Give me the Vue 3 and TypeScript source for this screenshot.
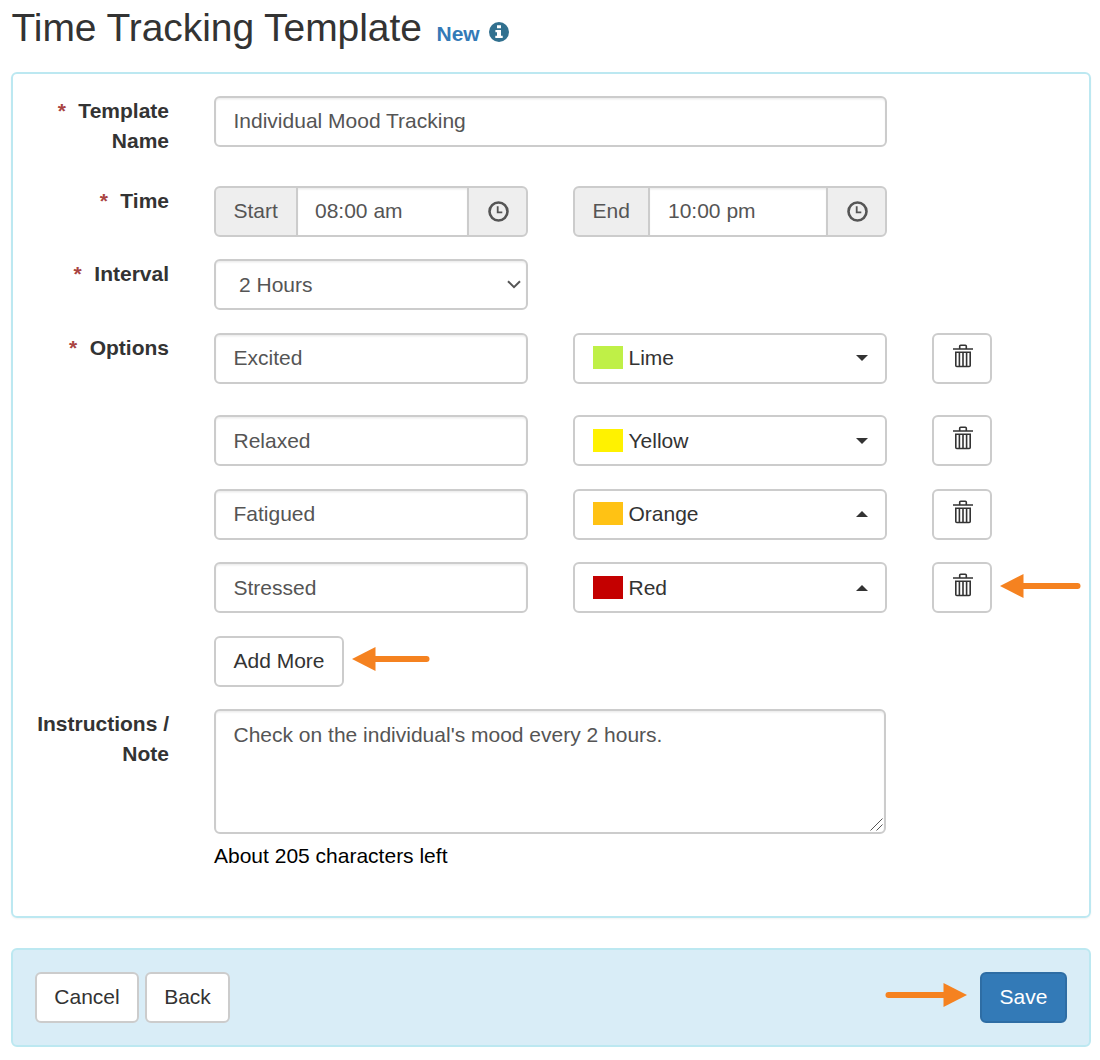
<script setup lang="ts">
import { ref } from 'vue'

interface MoodOption {
  name: string
  color: string
  label: string
  up: boolean
  height: number
}

const templateName = ref('Individual Mood Tracking')
const startTime = ref('08:00 am')
const endTime = ref('10:00 pm')
const note = ref("Check on the individual's mood every 2 hours.")

const options = ref<MoodOption[]>([
  { name: 'Excited', color: '#bff047', label: 'Lime', up: false, height: 82 },
  { name: 'Relaxed', color: '#fff200', label: 'Yellow', up: false, height: 74 },
  { name: 'Fatigued', color: '#ffc214', label: 'Orange', up: true, height: 73 },
  { name: 'Stressed', color: '#c40000', label: 'Red', up: true, height: 74 },
])
</script>

<template>
  <main class="page">
    <header class="heading">
      <h1>Time Tracking Template</h1>
      <span class="state">New</span>
      <svg class="info" viewBox="0 0 20 20">
        <circle cx="10" cy="10" r="10" fill="#31708f" />
        <path fill="#fff" d="M8 3.2h4v3H8zM6.4 8H12v5.8h1.7v2.3H6.3v-2.300H8v-3.500H6.4z" />
      </svg>
    </header>

    <section class="panel">
      <div class="row row-name">
        <label><i>*</i>Template<br />Name</label>
        <input v-model="templateName" class="control wide" />
      </div>

      <div class="row row-time">
        <label><i>*</i>Time</label>
        <div class="group">
          <span class="addon start">Start</span>
          <input v-model="startTime" />
          <span class="addon clock">
            <svg viewBox="0 0 21 21"><circle cx="10.5" cy="10.5" r="9" /><path d="M9.700 5.200v6.100h4.600" /></svg>
          </span>
        </div>
        <div class="group">
          <span class="addon end">End</span>
          <input v-model="endTime" class="end-input" />
          <span class="addon clock">
            <svg viewBox="0 0 21 21"><circle cx="10.5" cy="10.5" r="9" /><path d="M9.700 5.200v6.100h4.600" /></svg>
          </span>
        </div>
      </div>

      <div class="row row-interval">
        <label><i>*</i>Interval</label>
        <div class="control select">
          <span>2 Hours</span>
          <svg viewBox="0 0 14 9"><path d="M1 1.2 7 7.2 13 1.2" /></svg>
        </div>
      </div>

      <div
        v-for="(o, i) in options"
        :key="i"
        class="row option"
        :class="{ even: i % 2 === 1 }"
        :style="{ height: o.height + 'px' }"
      >
        <label><template v-if="i === 0"><i>*</i>Options</template></label>
        <input v-model="o.name" class="control" />
        <button class="btn dropdown">
          <span class="swatch" :style="{ background: o.color }"></span>
          <span>{{ o.label }}</span>
          <span class="caret" :class="{ up: o.up }"></span>
        </button>
        <button class="btn trash" aria-label="Delete">
          <svg viewBox="0 0 20 24">
            <path d="M0 5h20M6.700 5V2.200q0-1 1-1h4.600q1 0 1 1V5" />
            <path d="M2.800 8.200h14.400v13.300q0 1-1 1H3.800q-1 0-1-1zM6.400 8v14M10 8v14M13.600 8v14" />
          </svg>
        </button>
        <svg v-if="i === 3" class="arrow by-trash" width="81" height="24" viewBox="0 0 81 24">
          <path d="M0 12 23.5 0v24z" /><rect x="20" y="9" width="60.5" height="6" rx="3" />
        </svg>
      </div>

      <div class="row row-add">
        <label></label>
        <button class="btn add">Add More</button>
        <svg class="arrow by-add" width="78" height="24" viewBox="0 0 78 24">
          <path d="M0 12 23.5 0v24z" /><rect x="20" y="9" width="57.5" height="6" rx="3" />
        </svg>
      </div>

      <div class="row">
        <label>Instructions /<br />Note</label>
        <div class="note">
          <textarea v-model="note" class="control"></textarea>
          <svg class="grip" viewBox="0 0 13 13"><path d="M.5 12.5l12-12M6.5 12.5l6-6" /></svg>
          <p>About 205 characters left</p>
        </div>
      </div>
    </section>

    <footer class="actions">
      <button class="btn cancel">Cancel</button>
      <button class="btn back">Back</button>
      <svg class="arrow by-save" width="82" height="24" viewBox="0 0 82 24">
        <path d="M82 12 58.5 0v24z" /><rect x="0.5" y="9" width="62" height="6" rx="3" />
      </svg>
      <button class="btn save">Save</button>
    </footer>
  </main>
</template>

<style>
body {
  background: #fff;
}
</style>

<style scoped>
* {
  box-sizing: border-box;
}
.page {
  width: 1100px;
  height: 1060px;
  padding: 0 9px 0 11px;
  overflow: hidden;
  font: 21px/30px "Liberation Sans", Arial, sans-serif;
  color: #333;
}
input,
textarea,
button {
  margin: 0;
  font: inherit;
  outline: 0;
}
.heading {
  display: flex;
  height: 72px;
}
h1 {
  width: 425.5px;
  margin: 0;
  padding-left: 0.5px;
  font-size: 39px;
  font-weight: 400;
  line-height: 55px;
  letter-spacing: -0.07px;
  white-space: nowrap;
}
.state {
  width: 52.5px;
  padding-top: 19px;
  font-weight: 700;
  color: #337ab7;
}
.info {
  width: 20px;
  height: 20px;
  margin-top: 22px;
}
.panel {
  height: 846px;
  padding: 22px 0 0 22px;
  border: 2px solid #bce8f1;
  border-radius: 6px;
  box-shadow: 0 1px 2px rgba(0, 0, 0, 0.05);
}
.row {
  display: flex;
  align-items: flex-start;
}
.row-name {
  height: 90px;
}
.row-time {
  height: 73px;
}
.row-interval {
  height: 74px;
}
.row-add {
  height: 73px;
}
label {
  flex: none;
  width: 134px;
  margin-right: 45px;
  font-weight: 700;
  text-align: right;
  white-space: nowrap;
}
label i {
  margin-right: 12.5px;
  font-style: normal;
  color: #a94442;
}
.control {
  display: block;
  width: 314px;
  height: 51px;
  padding: 8px 17.5px 9px;
  color: #555;
  background: #fff;
  border: 2px solid #ccc;
  border-radius: 6px;
  box-shadow: inset 0 1.5px 1.5px rgba(0, 0, 0, 0.075);
}
.even .control {
  padding: 9px 17.5px 8px;
}
.wide {
  width: 673px;
}
.group {
  display: flex;
  width: 314px;
  height: 51px;
  margin-right: 45px;
  overflow: hidden;
  color: #555;
  background: #ccc;
  border: 2px solid #ccc;
  border-radius: 6px;
}
.group input {
  flex: 1;
  min-width: 0;
  padding: 0 17px 1px;
  color: #555;
  background: #fff;
  border: 0;
  border-right: 2px solid #ccc;
  border-left: 2px solid #ccc;
  box-shadow: inset 0 1.5px 1.5px rgba(0, 0, 0, 0.075);
}
.group .end-input {
  padding-left: 18px;
}
.addon {
  padding: 8px 0 0 17.5px;
  background: #eee;
}
.start {
  width: 80px;
}
.end {
  width: 73px;
}
.clock {
  width: 57px;
  padding: 13px 0 0 18.5px;
}
.clock svg {
  display: block;
  width: 21px;
  height: 21px;
  fill: none;
  stroke: #555;
  stroke-width: 2.6;
}
.clock path {
  stroke-width: 1.8;
}
.select {
  display: flex;
  align-items: center;
  justify-content: space-between;
  padding: 0 5px 0 23px;
}
.select svg {
  width: 14px;
  height: 9px;
  fill: none;
  stroke: #555;
  stroke-width: 2;
}
.btn {
  display: flex;
  align-items: center;
  justify-content: center;
  height: 51px;
  padding: 0 0 1px;
  color: #333;
  background: #fff;
  border: 2px solid #ccc;
  border-radius: 6px;
}
.dropdown {
  align-items: flex-start;
  justify-content: flex-start;
  width: 314px;
  margin-left: 45px;
  padding: 8px 17px 0 18px;
}
.even .dropdown {
  padding-top: 9px;
}
.swatch {
  width: 30px;
  height: 23px;
  margin: 3px 5.5px 0 0;
}
.caret {
  width: 12px;
  height: 6px;
  margin: 12px 0 0 auto;
  background: #333;
  clip-path: polygon(0 0, 100% 0, 50% 100%);
}
.caret.up {
  clip-path: polygon(50% 0, 100% 100%, 0 100%);
}
.trash {
  align-items: flex-start;
  width: 60px;
  margin-left: 45px;
  padding: 9px 0 0 2px;
}
.trash svg {
  width: 20px;
  height: 24px;
  fill: none;
  stroke: #333;
  stroke-width: 1.6;
}
.arrow {
  flex: none;
  fill: #f58220;
}
.by-trash {
  margin: 11.5px 0 0 8px;
}
.add {
  width: 130px;
}
.by-add {
  margin: 10.5px 0 0 8px;
}
.note {
  position: relative;
}
textarea.control {
  width: 672px;
  height: 125px;
  padding-top: 9px;
  overflow: hidden;
  resize: none;
}
.grip {
  position: absolute;
  top: 109px;
  right: 3px;
  width: 13px;
  height: 13px;
  fill: none;
  stroke: #555;
  stroke-width: 1;
}
.note p {
  margin: 7px 0 0;
  color: #000;
}
.actions {
  display: flex;
  height: 99px;
  margin-top: 30px;
  padding: 22px;
  background: #d9edf7;
  border: 2px solid #bce8f1;
  border-radius: 6px;
}
.cancel {
  width: 104px;
}
.back {
  width: 85px;
  margin-left: 6px;
}
.by-save {
  margin: 10.5px 13px 0 auto;
}
.save {
  width: 87px;
  color: #fff;
  background: #337ab7;
  border-color: #2e6da4;
}
</style>
